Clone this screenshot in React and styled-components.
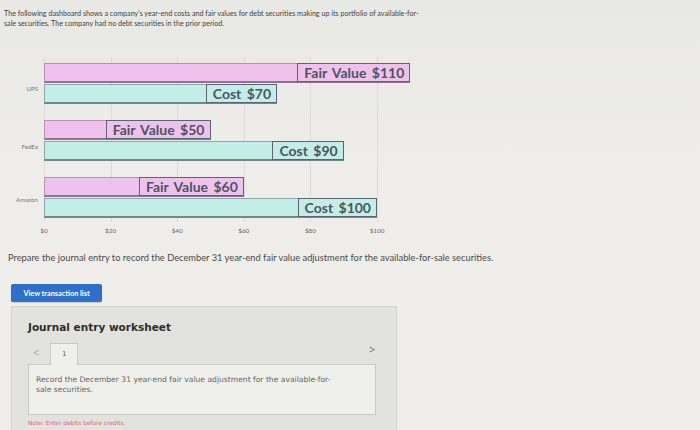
import React from 'react';
import styled, { createGlobalStyle } from 'styled-components';

const GlobalStyle = createGlobalStyle`
  html, body {
    margin: 0;
    padding: 0;
    background: #ecebe8;
  }
  body {
    width: 700px;
    height: 430px;
    overflow: hidden;
    font-family: Lato, "Open Sans", sans-serif;
  }
`;

const PX_PER_DOLLAR = 3.33;

const securities = [
  { name: 'UPS', fair: 110, cost: 70, shift: 5 },
  { name: 'FedEx', fair: 50, cost: 90, shift: 6 },
  { name: 'Amazon', fair: 60, cost: 100, shift: 2 },
];

const ticks = [0, 20, 40, 60, 80, 100];

const Page = styled.div`
  padding: 9px 0 0 4px;
  height: 430px;
  box-sizing: border-box;
  background: linear-gradient(180deg, #e8e8e5 0%, #eeedea 40%, #efeeeb 100%);
`;

const Intro = styled.p`
  margin: 0;
  width: 420px;
  font-size: 7.15px;
  line-height: 9.5px;
  color: #444;
`;

const Chart = styled.div`
  display: grid;
  grid-template-columns: 40px 372px;
  margin-top: 29px;
`;

const AxisNames = styled.div`
  display: flex;
  flex-direction: column;
  gap: 16px;
  padding-top: 6px;
`;

const AxisName = styled.div`
  height: 41px;
  display: flex;
  align-items: center;
  justify-content: flex-end;
  padding-right: 6px;
  font-size: 6.2px;
  color: #777;
  transform: translateY(${(p) => p.$shift}px);
`;

const Plot = styled.div`
  position: relative;
  height: 165px;
  display: flex;
  flex-direction: column;
  gap: 16px;
  padding-top: 6px;
  box-sizing: border-box;
`;

const GridLine = styled.div`
  position: absolute;
  top: 0;
  bottom: 0;
  width: 1px;
  background: #dcdcd8;
`;

const Group = styled.div`
  position: relative;
  display: flex;
  flex-direction: column;
  gap: 1px;
`;

const Bar = styled.div`
  height: 20px;
  box-sizing: border-box;
  display: flex;
  justify-content: flex-end;
  background: ${(p) => (p.$kind === 'fair' ? '#efc2ee' : '#c3eee8')};
  border: 1px solid ${(p) => (p.$kind === 'fair' ? '#b78fb8' : '#8ba7a8')};
  border-bottom: 2px solid ${(p) => (p.$kind === 'fair' ? '#8d7592' : '#6f8890')};
`;

const BarLabel = styled.span`
  height: 19px;
  margin: -1px -1px 0 0;
  box-sizing: border-box;
  padding: 0 5px 0 6px;
  display: flex;
  align-items: center;
  background: inherit;
  border: 1.5px solid #5d6573;
  font-family: Lato, sans-serif;
  font-weight: 700;
  font-size: 14px;
  color: #4d5560;
  white-space: nowrap;
  word-spacing: 2px;
`;

const TickRow = styled.div`
  position: relative;
  grid-column: 2;
  height: 14px;
  margin-top: 5px;
`;

const Tick = styled.span`
  position: absolute;
  top: 0;
  transform: translateX(-50%);
  font-size: 6.3px;
  color: #666;
`;

const Prompt = styled.p`
  margin: 11px 0 0 4px;
  font-size: 9.3px;
  color: #4a4a4a;
  white-space: nowrap;
`;

const ViewButton = styled.button`
  display: block;
  margin: 21px 0 0 7px;
  width: 91px;
  height: 18px;
  border: none;
  border-radius: 2px;
  background: #2d6fca;
  color: #fff;
  font-family: Lato, sans-serif;
  font-weight: 700;
  font-size: 7.3px;
  padding: 0;
  box-shadow: 0 1px 1px rgba(0, 0, 0, 0.15);
`;

const Worksheet = styled.section`
  margin: 4px 0 0 7px;
  width: 386px;
  height: 140px;
  box-sizing: border-box;
  background: #e2e2df;
  border: 1px solid #d2d2cf;
  padding: 14px 20px 0 16px;
  font-family: "DejaVu Sans", Verdana, sans-serif;
`;

const WorksheetTitle = styled.h2`
  margin: 0;
  font-size: 10.5px;
  font-weight: 700;
  color: #2e2e2e;
`;

const TabRow = styled.div`
  display: flex;
  align-items: flex-end;
  margin-top: 8px;
  height: 23px;
`;

const Arrow = styled.span`
  font-size: 10px;
  color: ${(p) => (p.$dim ? '#a9a9a9' : '#777')};
  align-self: center;
  margin: ${(p) => (p.$right ? '0 0 0 auto' : '0 10px 0 4px')};
  transform: ${(p) => (p.$right ? 'translateY(-3px) scaleX(0.8)' : 'scaleX(0.8)')};
`;

const Tab = styled.div`
  width: 28px;
  height: 22px;
  box-sizing: border-box;
  background: #efefec;
  border: 1px solid #c8c8c5;
  border-bottom: none;
  display: flex;
  justify-content: center;
  padding-top: 6px;
  font-size: 6.5px;
  color: #555;
  position: relative;
  z-index: 1;
  margin-bottom: -1px;
`;

const EntryBox = styled.div`
  width: 348px;
  height: 51px;
  box-sizing: border-box;
  background: #efefec;
  border: 1px solid #c8c8c5;
  padding: 10px 30px 0 7px;
  font-size: 7.6px;
  line-height: 10px;
  color: #666;
`;

const Note = styled.div`
  margin-top: 5px;
  font-size: 5.85px;
  color: #d4677e;
`;

export default function App() {
  return (
    <>
      <GlobalStyle />
      <Page>
        <Intro>
          The following dashboard shows a company's year-end costs and fair values for debt securities making up its portfolio of available-for-sale securities. The company had no debt securities in the prior period.
        </Intro>

        <Chart>
          <AxisNames>
            {securities.map((s) => (
              <AxisName key={s.name} $shift={s.shift}>{s.name}</AxisName>
            ))}
          </AxisNames>
          <Plot>
            {ticks.map((t) => (
              <GridLine key={t} style={{ left: t * PX_PER_DOLLAR }} />
            ))}
            {securities.map((s) => (
              <Group key={s.name}>
                <Bar $kind="fair" style={{ width: s.fair * PX_PER_DOLLAR }}>
                  <BarLabel>Fair Value ${s.fair}</BarLabel>
                </Bar>
                <Bar $kind="cost" style={{ width: s.cost * PX_PER_DOLLAR }}>
                  <BarLabel>Cost ${s.cost}</BarLabel>
                </Bar>
              </Group>
            ))}
          </Plot>
          <TickRow>
            {ticks.map((t) => (
              <Tick key={t} style={{ left: t * PX_PER_DOLLAR }}>${t}</Tick>
            ))}
          </TickRow>
        </Chart>

        <Prompt>
          Prepare the journal entry to record the December 31 year-end fair value adjustment for the available-for-sale securities.
        </Prompt>

        <ViewButton>View transaction list</ViewButton>

        <Worksheet>
          <WorksheetTitle>Journal entry worksheet</WorksheetTitle>
          <TabRow>
            <Arrow $dim>&lt;</Arrow>
            <Tab>1</Tab>
            <Arrow $right>&gt;</Arrow>
          </TabRow>
          <EntryBox>
            Record the December 31 year-end fair value adjustment for the available-for-sale securities.
          </EntryBox>
          <Note>Note: Enter debits before credits.</Note>
        </Worksheet>
      </Page>
    </>
  );
}
